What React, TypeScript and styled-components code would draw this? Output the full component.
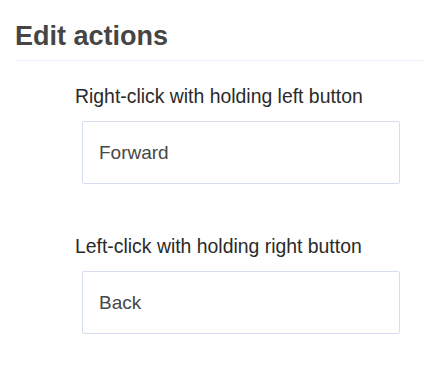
import React from "react";
import styled, { createGlobalStyle } from "styled-components";

const Global = createGlobalStyle`
  html, body { margin: 0; padding: 0; background: #fff; }
  body { font-family: "Liberation Sans", Arial, sans-serif; }
`;

const Page = styled.div`
  padding: 0 0 0 15px;
`;

const Heading = styled.h2`
  margin: 0;
  padding: 21px 0 9px;
  font-size: 27px;
  font-weight: bold;
  color: #454545;
  line-height: 30px;
  border-bottom: 1px solid #ececfb;
`;

const List = styled.div`
  display: flex;
  flex-direction: column;
  gap: 51px;
  padding: 24px 0 0 60px;
`;

const Item = styled.div`
  display: flex;
  flex-direction: column;
  gap: 14px;
`;

const Label = styled.div`
  font-size: 19.4px;
  color: #2a2a2a;
  line-height: 22px;
`;

const Field = styled.div`
  margin-left: 7px;
  box-sizing: border-box;
  width: 318px;
  height: 63px;
  border: 1px solid #d6ddf3;
  border-radius: 2px;
  display: flex;
  align-items: center;
  padding-left: 16px;
  font-size: 19px;
  color: #484848;
`;

const actions = [
  { label: "Right-click with holding left button", value: "Forward" },
  { label: "Left-click with holding right button", value: "Back" },
];

export default function App() {
  return (
    <>
      <Global />
      <Page>
        <Heading>Edit actions</Heading>
        <List>
          {actions.map((a) => (
            <Item key={a.label}>
              <Label>{a.label}</Label>
              <Field>{a.value}</Field>
            </Item>
          ))}
        </List>
      </Page>
    </>
  );
}
